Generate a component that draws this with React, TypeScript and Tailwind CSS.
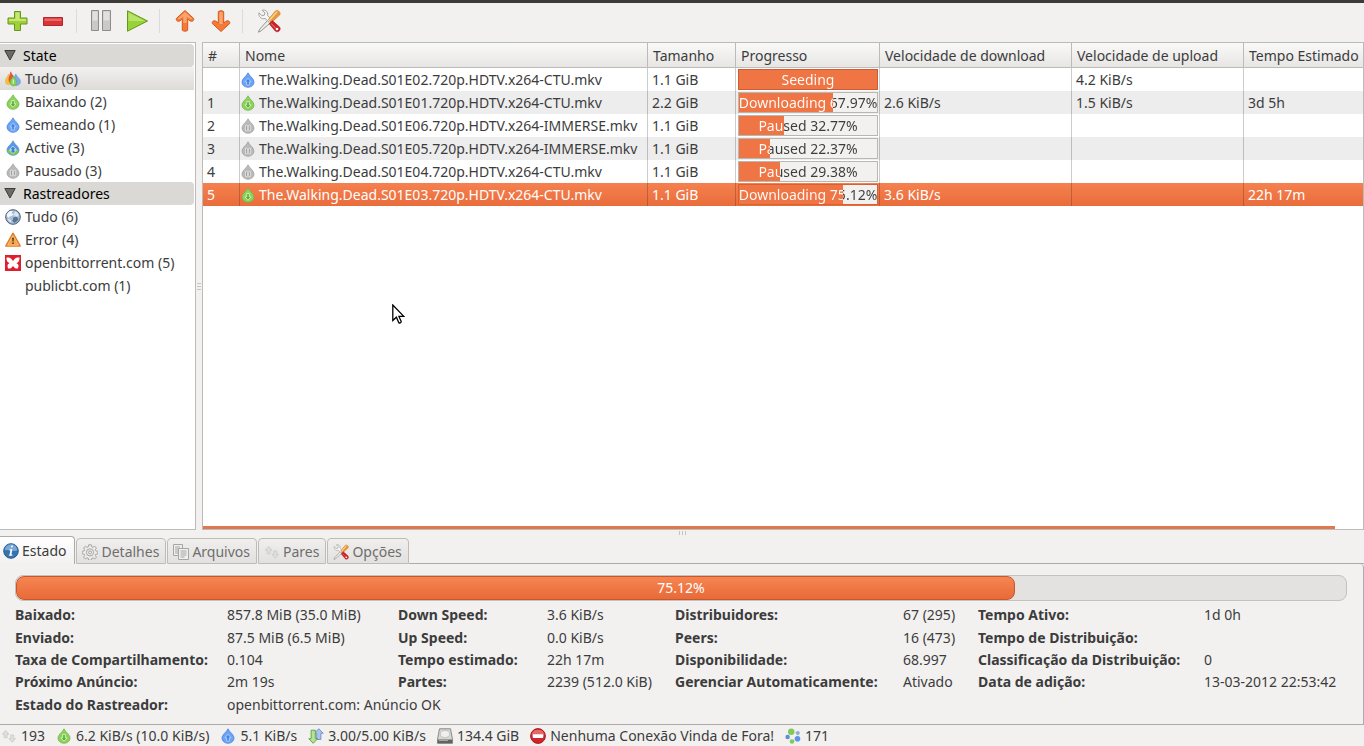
import { useState, type ReactNode } from "react";

type DropKind = "down" | "up" | "active" | "paused";

type Torrent = {
  pos: string;
  icon: DropKind;
  name: string;
  size: string;
  status: string;
  progress: number;
  down: string;
  up: string;
  eta: string;
};

const torrents: Torrent[] = [
  { pos: "", icon: "up", name: "The.Walking.Dead.S01E02.720p.HDTV.x264-CTU.mkv", size: "1.1 GiB", status: "Seeding", progress: 100, down: "", up: "4.2 KiB/s", eta: "" },
  { pos: "1", icon: "down", name: "The.Walking.Dead.S01E01.720p.HDTV.x264-CTU.mkv", size: "2.2 GiB", status: "Downloading 67.97%", progress: 67.97, down: "2.6 KiB/s", up: "1.5 KiB/s", eta: "3d 5h" },
  { pos: "2", icon: "paused", name: "The.Walking.Dead.S01E06.720p.HDTV.x264-IMMERSE.mkv", size: "1.1 GiB", status: "Paused 32.77%", progress: 32.77, down: "", up: "", eta: "" },
  { pos: "3", icon: "paused", name: "The.Walking.Dead.S01E05.720p.HDTV.x264-IMMERSE.mkv", size: "1.1 GiB", status: "Paused 22.37%", progress: 22.37, down: "", up: "", eta: "" },
  { pos: "4", icon: "paused", name: "The.Walking.Dead.S01E04.720p.HDTV.x264-CTU.mkv", size: "1.1 GiB", status: "Paused 29.38%", progress: 29.38, down: "", up: "", eta: "" },
  { pos: "5", icon: "down", name: "The.Walking.Dead.S01E03.720p.HDTV.x264-CTU.mkv", size: "1.1 GiB", status: "Downloading 75.12%", progress: 75.12, down: "3.6 KiB/s", up: "", eta: "22h 17m" },
];

const columns = ["#", "Nome", "Tamanho", "Progresso", "Velocidade de download", "Velocidade de upload", "Tempo Estimado"];

const details = [
  ["Baixado:", "857.8 MiB (35.0 MiB)", "Down Speed:", "3.6 KiB/s", "Distribuidores:", "67 (295)", "Tempo Ativo:", "1d 0h"],
  ["Enviado:", "87.5 MiB (6.5 MiB)", "Up Speed:", "0.0 KiB/s", "Peers:", "16 (473)", "Tempo de Distribuição:", ""],
  ["Taxa de Compartilhamento:", "0.104", "Tempo estimado:", "22h 17m", "Disponibilidade:", "68.997", "Classificação da Distribuição:", "0"],
  ["Próximo Anúncio:", "2m 19s", "Partes:", "2239 (512.0 KiB)", "Gerenciar Automaticamente:", "Ativado", "Data de adição:", "13-03-2012 22:53:42"],
  ["Estado do Rastreador:", "openbittorrent.com: Anúncio OK"],
];

const dropColors = {
  down: ["#8ed05c", "#6fb846"],
  up: ["#6ba3f5", "#4a80e0"],
  active: ["#5b95ea", "#5a92c8"],
  paused: ["#b9b9b9", "#a3a3a3"],
};

/* ---------- icons ---------- */

function Drop({ kind }: { kind: DropKind }) {
  const [fill, stroke] = dropColors[kind];
  return (
    <svg width="16" height="16" viewBox="0 0 16 16" className="shrink-0">
      <path d="M8 .8C9.200 4 14 6.400 14 10.200A6 5.200 0 0 1 8 15.300a6 5.200 0 0 1-6-5.100C2 6.400 6.800 4 8 .8z" fill={fill} stroke={stroke} strokeWidth=".8" />
      {kind === "active" && <path d="M2.400 10h11.200A5.600 5 0 0 1 8 15a5.600 5 0 0 1-5.600-5z" fill="#7cc653" />}
      {kind === "down" && <path d="M6.700 6.400h2.600v3.400h1.800L8 13.300 4.900 9.800h1.800z" fill="#5cb238" stroke="#d5f3bf" strokeWidth=".9" />}
      {kind === "up" && <path d="M6.700 13.200h2.600V9.800h1.800L8 6.300 4.900 9.800h1.800z" fill="#3f80e6" stroke="#b6d5ff" strokeWidth=".9" />}
      {kind === "active" && <path d="M8 6.200l3.300 3.200H9.600v1h1.700L8 13.600l-3.300-3.200h1.700v-1H4.700z" fill="#3f80d0" stroke="#c2e7dd" strokeWidth=".9" />}
      {kind === "paused" && <path d="M5.500 7.300h1.900v5.400H5.500zM8.700 7.300h1.900v5.400H8.700z" fill="#9b9b9b" stroke="#e8e8e8" strokeWidth=".8" />}
    </svg>
  );
}

function AllDrops() {
  return (
    <svg width="16" height="16" viewBox="0 0 16 16" className="shrink-0">
      <path d="M10.800 3c.8 2.600 4.700 4.600 4.700 7.800a4 4 0 0 1-4.500 3.700C8 14.400 7 12 7.600 9.500z" fill="#7faaea" stroke="#5c8fdc" strokeWidth=".5" />
      <path d="M3.400 3.200C3.800 5.500 6 7.500 6 10.300c0 2-1 3.300-2.700 3.300S.4 12.300.4 10.300c0-2.800 2.600-4.800 3-7.100z" fill="#f5c13e" stroke="#e0a92a" strokeWidth=".5" />
      <path d="M5.800.8c.5 2.700 3.400 4.200 3.400 8 0 2.300-1.500 4-3.500 4-1.200-1.700-2-3-1.800-5C4.200 5.200 5.400 3.200 5.800.8z" fill="#ea5632" stroke="#cf4526" strokeWidth=".5" />
      <path d="M8.400 4.800c.6 2.400 3.200 3.400 3.200 6.200 0 2.500-1.300 4-3.300 4S5 13.500 5 11c0-2.800 2.800-3.800 3.400-6.200z" fill="#86cf56" stroke="#62b03c" strokeWidth=".5" />
      <path d="M7.700 8.500h1.300v4.200H7.700z" fill="#d9f3c5" />
    </svg>
  );
}

function Globe() {
  return (
    <svg width="16" height="16" viewBox="0 0 16 16" className="shrink-0">
      <circle cx="8" cy="8" r="7.300" fill="#a9bdd4" stroke="#46596f" strokeWidth="1" />
      <path d="M3 3.600c1.500-1.400 3.300-1.800 4.600-1.300l-.9 1.900 1.600 1-1.400 1.900-2 .2L4 9 2 7.600C1.600 6 2 4.800 3 3.600z" fill="#f1f5f9" />
      <path d="M9.700 2.300c2 .4 3.600 2 4 4.200l-1.800 1.200-1.600-1.300-1.600.3-.3-1.700 1.500-1z" fill="#dfe8f1" />
      <path d="M8.500 8.200l3.400-.1 1.500 1.700c-.6 2-2 3.500-4 4L7.300 12 8 10z" fill="#55739a" />
      <path d="M2.600 9.800l3 1 .9 2.600c-1.700-.4-3.300-1.700-3.900-3.600z" fill="#dfe8f1" />
    </svg>
  );
}

function Warning() {
  return (
    <svg width="16" height="16" viewBox="0 0 16 16" className="shrink-0">
      <path d="M8 1.500L15 14H1z" fill="#f7a64a" stroke="#e27a26" strokeWidth="1.700" strokeLinejoin="round" />
      <path d="M8 3.300l5.500 9.900h-11z" fill="none" stroke="#fccf92" strokeWidth=".7" />
      <path d="M7.200 5.800h1.600L8.500 9.500h-1zM7.300 10.500h1.400v1.400H7.300z" fill="#3b2a1c" />
    </svg>
  );
}

function Butterfly() {
  return (
    <svg width="16" height="16" viewBox="0 0 16 16" className="shrink-0">
      <path d="M0 0h16v16H0z" fill="#e01f2c" />
      <path d="M1.500 2.500c1.700-.3 3.400 0 4.500 1.100L8 6l2-2.400c1.100-1.100 2.800-1.400 4.500-1.100 0 2-.3 3.400-1 4.300-.5.700-1.200 1.100-2 1.500 1.200.4 1.900 1.200 2 2.400 0 1-.3 2-.7 2.900-1.100.1-2.200-.1-3-.7L8 11l-1.800 1.900c-.8.6-1.900.8-3 .7-.4-.9-.7-1.900-.7-2.900.1-1.200.8-2 2-2.400-.8-.4-1.500-.8-2-1.500-.7-.9-1-2.300-1-4.300z" fill="#fff" />
    </svg>
  );
}

function Tools({ size }: { size: number }) {
  return (
    <svg width={size} height={size} viewBox="0 0 24 24" className="shrink-0">
      <path d="M14.400 13L4.200 21.800l-2.800 1.400 1.200-2.900 9-10z" fill="#ecece9" stroke="#8a8c88" strokeWidth=".9" />
      <path d="M2 3.800l3 3 2.400-.7.500-2.300-2.700-2.600c3.400-.8 6.200 1.800 5.400 5.200l4.400 4.400-2.700 2.700-4.200-4C4.400 10.600 1 7.400 2 3.800z" fill="#f6f6f4" stroke="#979996" strokeWidth=".9" strokeLinejoin="round" />
      <path d="M11.400 10.600L18.400 2c2-1.900 5.800 1.400 4.400 3.800l-8.300 7.800z" fill="#e8973a" stroke="#cf8425" strokeWidth=".7" />
      <path d="M13 10.600l6.700-7.600" stroke="#fbd08a" strokeWidth="1.600" strokeLinecap="round" />
      <path d="M12.300 14.800l3.200-3 6.800 6c2.500 2.600-1.200 6.600-4 4.200z" fill="#cc2027" stroke="#a9191f" strokeWidth=".7" />
      <path d="M14.500 14.800l3.800 3.800" stroke="#e66a63" strokeWidth="1.200" strokeLinecap="round" />
      <circle cx="20" cy="20" r="1.300" fill="#fff" />
    </svg>
  );
}

function Info() {
  return (
    <svg width="16" height="16" viewBox="0 0 16 16" className="shrink-0">
      <circle cx="8" cy="8" r="7.300" fill="#3574ae" stroke="#2b5f95" />
      <path d="M1.800 7.500a6.200 6.200 0 0 1 12.400 0C10.500 9 5.500 6 1.800 7.500z" fill="#79a9d6" />
      <path d="M8.300 2.600l1.600-.2-.3 1.800-1.600.2zM6.500 6.200h2.900l-1 5.200h1.100l-.2 1.300H6l.2-1.100h.4l.8-4.300h-1z" fill="#fff" />
    </svg>
  );
}

function Gear() {
  return (
    <svg width="16" height="16" viewBox="0 0 16 16" fill="none" stroke="#a6a6a4" className="shrink-0">
      <path d="M6.700.8h2.600l.4 2 1.300.6 1.700-1.200 1.700 1.800-1.100 1.700.5 1.200 2 .4v2.500l-2 .4-.5 1.300 1.100 1.700-1.700 1.800-1.800-1.200-1.200.5-.4 1.900H6.700l-.4-1.900-1.200-.5-1.800 1.200-1.700-1.800 1.100-1.700-.5-1.300-2-.4V7.300l2-.4.5-1.200-1.100-1.700 1.700-1.800L5 3.400l1.300-.6z" fill="#ececea" />
      <circle cx="8" cy="8.400" r="3.600" />
      <circle cx="8" cy="8.400" r="1.500" />
    </svg>
  );
}

function Files() {
  return (
    <svg width="16" height="16" viewBox="0 0 16 16" stroke="#a6a6a4" className="shrink-0">
      <path d="M.5.5h9v11h-9z" fill="#efefed" />
      <path d="M2 3h5M2 5h3M2 7h3M2 9h3" />
      <path d="M5.500 4.500h10v11h-10z" fill="#efefed" />
      <path d="M7.500 7h6M7.500 9h6M7.500 11h6M7.500 13h4" />
    </svg>
  );
}

function Peers() {
  return (
    <svg width="16" height="16" viewBox="0 0 16 16" fill="#dededc" stroke="#c6c6c4" strokeWidth=".7" className="shrink-0">
      <path d="M4.600 2.500L8 6.200H6.200v3.600H3.100V6.200H1.300z" />
      <path d="M11.300 14.300L7.900 10.600h1.800V7h3.100v3.600h1.800z" />
    </svg>
  );
}

function SpeedArrows() {
  return (
    <svg width="16" height="16" viewBox="0 0 16 16" className="shrink-0">
      <path d="M10.800.7l4.400 4.600h-2.300v6.200H8.700V5.300H6.400z" fill="#a9c4ee" stroke="#6f8dc0" strokeWidth=".9" />
      <path d="M5.200 15.300L.8 10.700h2.300V2.200h4.200v8.500h2.300z" fill="#b6e39a" stroke="#5b9d3d" strokeWidth=".9" />
    </svg>
  );
}

function Disk() {
  return (
    <svg width="16" height="16" viewBox="0 0 16 16" className="shrink-0">
      <path d="M2.500.8h11l2 10.500v4H.5v-4z" fill="#d6d6d4" stroke="#7f7f7d" strokeWidth=".9" />
      <ellipse cx="8" cy="6" rx="4.800" ry="3.600" fill="#efefed" stroke="#b4b4b2" strokeWidth=".7" />
      <path d="M.8 11.500h14.400v3.700H.8z" fill="#636361" />
      <path d="M2 12.500h9" stroke="#a8a8a6" />
    </svg>
  );
}

function NoEntry() {
  return (
    <svg width="16" height="16" viewBox="0 0 16 16" className="shrink-0">
      <circle cx="8" cy="8" r="7.400" fill="#d0262b" stroke="#a01217" strokeWidth=".9" />
      <path d="M1.600 7a6.500 6.500 0 0 1 12.800 0z" fill="#e4686a" />
      <rect x="2.700" y="6.200" width="10.600" height="3.800" rx="1" fill="#fff" />
    </svg>
  );
}

function Nodes() {
  return (
    <svg width="16" height="16" viewBox="0 0 16 16" className="shrink-0">
      <path d="M6.500 3.500L3 8.500l4 4.500 6-2.500V5z" fill="none" stroke="#c9d5e3" strokeWidth=".8" />
      <circle cx="6.200" cy="3.700" r="3.200" fill="#82c957" />
      <circle cx="12.800" cy="5" r="2" fill="#8eaed6" />
      <circle cx="2.600" cy="9" r="2.200" fill="#5f8fd4" />
      <circle cx="12.500" cy="10.700" r="2.800" fill="#5b95ea" />
      <circle cx="7" cy="13.500" r="2.300" fill="#82c957" />
    </svg>
  );
}

/* ---------- pieces ---------- */

function ToolButton({ label, children }: { label: string; children: ReactNode }) {
  return (
    <button aria-label={label} className="flex h-9 w-9 items-center justify-center">
      <svg width="24" height="24" viewBox="0 0 24 24">{children}</svg>
    </button>
  );
}

function ToolSeparator() {
  return <div className="mr-1.5 ml-1 h-6 w-px bg-[#dddbd8]" />;
}

function Toolbar() {
  return (
    <div className="flex h-[39px] shrink-0 items-center pb-1">
      <ToolButton label="Adicionar">
        <path d="M8.500 2.500h6v6.500h6.500v6h-6.500v6.500h-6V15H2V9h6.500z" fill="#9fd137" stroke="#64981c" strokeLinejoin="round" />
        <path d="M9.500 3.500h4V10H20v2H3v-2h6.500z" fill="#c6e873" />
      </ToolButton>
      <ToolButton label="Remover">
        <path d="M1.500 8.500h19v8h-19z" fill="#d93539" stroke="#b5262a" strokeLinejoin="round" />
        <path d="M2.500 9.500h17v2.500h-17z" fill="#e8686a" />
      </ToolButton>
      <ToolSeparator />
      <ToolButton label="Pausar">
        <path d="M2.500 1.500h7v20h-7zM13.500 1.500h8v20h-8z" fill="#c9c9c6" stroke="#8c8c89" />
        <path d="M3.500 2.500h5v9h-5zM14.500 2.500h6v9h-6z" fill="#e0e0de" />
      </ToolButton>
      <ToolButton label="Continuar">
        <path d="M2.500 1.800L22.500 12 2.500 22.200z" fill="#97d236" stroke="#64981c" strokeLinejoin="round" />
        <path d="M3.500 3.400L19.500 12H3.500z" fill="#b9e46c" />
      </ToolButton>
      <ToolSeparator />
      <ToolButton label="Subir na fila">
        <path d="M13 1.500l8.700 8c.4 2.300-1.600 3.600-3.900 2.200L15.700 10v11.300c-1 1.200-4.400 1.200-5.400 0V10l-2.100 1.700c-2.300 1.400-4.300.1-3.900-2.200z" fill="#f37a37" stroke="#d6591f" strokeLinejoin="round" />
        <path d="M13 3l7.200 6.500c-.8 1.400-2.600.4-5.500-2.100V14h-3.400V7.400C8.400 9.900 6.600 10.900 5.800 9.500z" fill="#f9a56d" />
      </ToolButton>
      <ToolButton label="Descer na fila">
        <path d="M13 22.500l8.700-8c.4-2.300-1.600-3.600-3.900-2.200L15.700 14V2.700c-1-1.200-4.400-1.200-5.400 0V14l-2.100-1.700c-2.300-1.400-4.300-.1-3.900 2.200z" fill="#f37a37" stroke="#d6591f" strokeLinejoin="round" />
        <path d="M11.300 3.400c.8-.6 2.600-.6 3.400 0V15h-3.400z" fill="#f9a56d" />
      </ToolButton>
      <ToolSeparator />
      <button aria-label="Preferências" className="flex h-9 w-10 items-center justify-center">
        <Tools size={24} />
      </button>
    </div>
  );
}

function GroupHeader({ children }: { children: ReactNode }) {
  return (
    <h2 className="flex h-[23px] items-center gap-[7px] rounded-r-sm bg-[#dbd9d5] pl-1 text-black">
      <svg width="12" height="14" viewBox="0 0 12 14">
        <path d="M.8 1.500h10.400L6 11z" fill="#6a6a68" stroke="#3c3c3a" />
      </svg>
      {children}
    </h2>
  );
}

function FilterItem({ icon, active, children }: { icon?: ReactNode; active?: boolean; children: ReactNode }) {
  return (
    <li>
      <button className={`flex h-[23px] w-full items-center gap-1 pl-[5px] text-left whitespace-nowrap ${active ? "bg-linear-to-b from-[#f2f1f0] to-[#dddbd8]" : ""}`}>
        <span className="w-4 shrink-0">{icon}</span>
        {children}
      </button>
    </li>
  );
}

function CellProgress({ value, text, selected }: { value: number; text: string; selected: boolean }) {
  const border = selected ? "border-[#d9602f]" : value === 100 ? "border-[#cf5c30]" : "border-[#b9b7b4]";
  return (
    <div className={`mr-px ml-0.5 h-[21px] border bg-[#f2f1f0] ${border}`}>
      <div
        className="h-full"
        style={{ background: `linear-gradient(to right, #f07545 ${value}%, transparent ${value}%)` }}
      >
        {/* label switches colour where the filled part ends */}
        <div
          className="flex h-full items-center justify-center bg-clip-text leading-[19px] whitespace-nowrap text-transparent"
          style={{ backgroundImage: `linear-gradient(to right, #fff ${value}%, #3c3c3c ${value}%)` }}
        >
          {text}
        </div>
      </div>
    </div>
  );
}

function TorrentTable() {
  const [selected, setSelected] = useState("5");
  const cell = "h-[23px] border-r border-black/20 px-1 py-0 last:border-r-0";

  return (
    <table className="w-full table-fixed border-separate border-spacing-0 leading-[22px] whitespace-nowrap">
      <colgroup>
        <col className="w-[37px]" />
        <col className="w-[408px]" />
        <col className="w-[88px]" />
        <col className="w-36" />
        <col className="w-48" />
        <col className="w-[172px]" />
        <col />
      </colgroup>
      <thead>
        <tr className="bg-linear-to-b from-[#f9f9f8] to-[#e6e5e3] text-left">
          {columns.map((c) => (
            <th key={c} className="h-[25px] border-r border-b border-[#bdbbb8] px-[5px] pt-0.5 pb-0 font-normal last:border-r-0">
              {c}
            </th>
          ))}
        </tr>
      </thead>
      <tbody>
        {torrents.map((t, i) => {
          const on = t.pos === selected;
          return (
            <tr
              key={t.name}
              onClick={() => setSelected(t.pos)}
              className={on ? "bg-linear-to-b from-[#f5804f] to-[#ea6c3b] text-white" : i % 2 ? "bg-[#ededed]" : "bg-white"}
            >
              <td className={cell}>{t.pos}</td>
              <td className="h-[23px] border-r border-black/20 p-0">
                <div className="flex items-center gap-[3px]">
                  <Drop kind={t.icon} />
                  {t.name}
                </div>
              </td>
              <td className={cell}>{t.size}</td>
              <td className="h-[23px] border-r border-black/20 p-0">
                <CellProgress value={t.progress} text={t.status} selected={on} />
              </td>
              <td className={cell}>{t.down}</td>
              <td className={cell}>{t.up}</td>
              <td className={cell}>{t.eta}</td>
            </tr>
          );
        })}
      </tbody>
    </table>
  );
}

const tabs = [
  { name: "Estado", icon: <Info /> },
  { name: "Detalhes", icon: <Gear /> },
  { name: "Arquivos", icon: <Files /> },
  { name: "Pares", icon: <Peers /> },
  { name: "Opções", icon: <Tools size={16} /> },
];

function Tabs() {
  return (
    <div role="tablist" className="flex h-7 items-end gap-px">
      {tabs.map((tab, i) => (
        <button
          key={tab.name}
          role="tab"
          aria-selected={i === 0}
          className={
            i === 0
              ? "flex h-7 items-center gap-[3px] rounded-tr border-t border-r border-[#aeaca9] bg-linear-to-b from-white to-[#f2f1f0] pt-px pr-2 pl-[3px]"
              : "flex h-[26px] items-center gap-[3px] rounded-t border border-[#bebcb9] bg-linear-to-b from-[#f0efee] to-[#e2e1df] pt-px pr-1.5 pl-[5px] text-[#6e6e6c]"
          }
        >
          {tab.icon}
          {tab.name}
        </button>
      ))}
      <div className="-ml-px flex-1 self-end border-b border-[#aeaca9]" />
    </div>
  );
}

function StatusItem({ icon, children }: { icon: ReactNode; children: ReactNode }) {
  return (
    <div className="flex items-center gap-1">
      {icon}
      <span>{children}</span>
    </div>
  );
}

export default function App() {
  return (
    <div className="relative flex min-h-screen flex-col overflow-hidden bg-[#f2f1f0] font-['Noto_Sans',sans-serif] text-[14px] leading-[22px] text-[#3c3c3c]">
      <div className="h-[3px] shrink-0 bg-[#3c3b37]" />
      <Toolbar />

      <main className="flex flex-1">
        <nav className="w-[196px] shrink-0 border-y border-r border-[#bdbbb8] bg-white pt-px pr-px">
          <GroupHeader>State</GroupHeader>
          <ul>
            <FilterItem icon={<AllDrops />} active>Tudo (6)</FilterItem>
            <FilterItem icon={<Drop kind="down" />}>Baixando (2)</FilterItem>
            <FilterItem icon={<Drop kind="up" />}>Semeando (1)</FilterItem>
            <FilterItem icon={<Drop kind="active" />}>Active (3)</FilterItem>
            <FilterItem icon={<Drop kind="paused" />}>Pausado (3)</FilterItem>
          </ul>
          <GroupHeader>Rastreadores</GroupHeader>
          <ul>
            <FilterItem icon={<Globe />}>Tudo (6)</FilterItem>
            <FilterItem icon={<Warning />}>Error (4)</FilterItem>
            <FilterItem icon={<Butterfly />}>openbittorrent.com (5)</FilterItem>
            <FilterItem>publicbt.com (1)</FilterItem>
          </ul>
        </nav>
        <div className="flex w-1.5 shrink-0 flex-col items-center justify-center gap-0.5">
          <div className="h-px w-1 bg-[#c6c4c1]" />
          <div className="h-px w-1 bg-[#c6c4c1]" />
          <div className="h-px w-1 bg-[#c6c4c1]" />
        </div>
        <section className="flex min-w-0 flex-1 flex-col justify-between border border-[#bdbbb8] bg-white">
          <TorrentTable />
          <div className="mr-7 h-[3px] bg-[#e2764c]" />
        </section>
      </main>

      <div className="flex h-1.5 shrink-0 items-center justify-center gap-0.5">
        <div className="h-1 w-px bg-[#c6c4c1]" />
        <div className="h-1 w-px bg-[#c6c4c1]" />
        <div className="h-1 w-px bg-[#c6c4c1]" />
      </div>

      <Tabs />
      <section className="shrink-0 rounded-tr border-r border-b border-[#aeaca9] px-[15px] pt-[11px] pb-2">
        <div className="mr-px grid h-[26px] overflow-hidden rounded-lg border border-[#c4c2bf] bg-[#e3e2e0]">
          <div
            className="col-start-1 row-start-1 rounded-lg border border-[#c9572c] bg-linear-to-b from-[#f68552] to-[#e86a38]"
            style={{ width: "75.12%" }}
          />
          <span className="z-10 col-start-1 row-start-1 text-center leading-6 text-white">75.12%</span>
        </div>
        <dl className="mt-[3px] grid h-28 grid-cols-[212px_171px_149px_128px_228px_75px_226px_1fr] grid-rows-5 items-center whitespace-nowrap">
          {details.map((row) =>
            row.map((text, i) =>
              i % 2 === 0 ? (
                <dt key={text} className="font-bold">{text}</dt>
              ) : (
                <dd key={row[i - 1]}>{text}</dd>
              )
            )
          )}
        </dl>
      </section>

      <footer className="flex h-[21px] shrink-0 items-center gap-[11px] pl-px whitespace-nowrap">
        <StatusItem icon={<Peers />}>193</StatusItem>
        <StatusItem icon={<Drop kind="down" />}>6.2 KiB/s (10.0 KiB/s)</StatusItem>
        <StatusItem icon={<Drop kind="up" />}>5.1 KiB/s</StatusItem>
        <StatusItem icon={<SpeedArrows />}>3.00/5.00 KiB/s</StatusItem>
        <StatusItem icon={<Disk />}>134.4 GiB</StatusItem>
        <StatusItem icon={<NoEntry />}>Nenhuma Conexão Vinda de Fora!</StatusItem>
        <StatusItem icon={<Nodes />}>171</StatusItem>
      </footer>

      {/* mouse pointer */}
      <svg width="13" height="21" viewBox="0 0 13 21" className="pointer-events-none absolute top-[304px] left-[392px]">
        <path d="M.8 1v15.500l3.600-3.300 2.400 5.600c1.500.6 2.600-.2 2.300-1.500l-2.200-4.900h4.900z" fill="#fff" stroke="#000" strokeWidth="1.300" />
      </svg>
    </div>
  );
}
